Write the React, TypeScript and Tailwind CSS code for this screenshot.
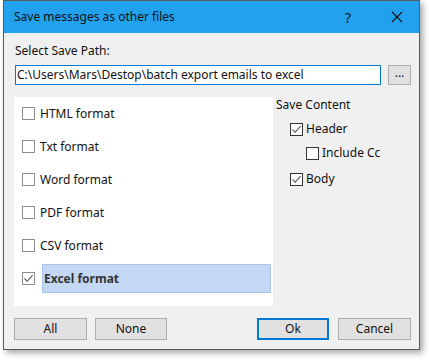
import React from 'react';

const FONT = { fontFamily: '"Segoe UI", "Noto Sans", sans-serif' };

function Check({ checked, dark }: { checked?: boolean; dark?: boolean }) {
  return (
    <span
      className={`flex h-[13px] w-[13px] shrink-0 items-center justify-center border bg-white ${dark ? 'border-[#333]' : 'border-[#8c8c8c]'}`}
    >
      {checked && (
        <svg width="11" height="11" viewBox="0 0 11 11" fill="none">
          <path d="M1.5 5.5 L4.2 8.3 L9.6 2.2" stroke="#555" strokeWidth="1.1" />
        </svg>
      )}
    </span>
  );
}

function Btn({ children, primary, className = '' }: { children: React.ReactNode; primary?: boolean; className?: string }) {
  return (
    <div
      className={`flex h-[22px] items-center justify-center bg-[#e1e1e1] text-[12px] text-[#111] ${primary ? 'border-2 border-[#0078d7]' : 'border border-[#adadad]'} ${className}`}
    >
      {children}
    </div>
  );
}

const FORMATS = ['HTML format', 'Txt format', 'Word format', 'PDF format', 'CSV format'];

export default function App() {
  return (
    <div className="h-[360px] w-[429px] bg-white" style={FONT}>
      <div className="ml-[3px] flex h-[350px] w-[417px] flex-col border border-[#5a5a5a] bg-[#f0f0f0] shadow-[3px_3px_6px_rgba(0,0,0,0.35)]">
        <div className="flex h-[32px] shrink-0 items-center bg-[#22a1ee] pl-[10px] text-[12px] text-[#111]">
          <span>Save messages as other files</span>
          <span className="ml-auto mr-[40px] text-[14px]">?</span>
          <svg width="12" height="12" viewBox="0 0 12 12" className="mr-[16px]">
            <path d="M1 1 L11 11 M11 1 L1 11" stroke="#111" strokeWidth="1.1" />
          </svg>
        </div>

        <div className="pl-[11px] pr-[8px]">
          <div className="mt-[9px] h-[17px] text-[12px] leading-[17px] text-[#111]">Select Save Path:</div>
          <div className="mt-[6px] flex gap-[7px]">
            <div className="flex h-[20px] w-[366px] items-center border border-[#0078d7] bg-white pl-[1px] text-[12px] text-[#111]">
              C:\Users\Mars\Destop\batch export emails to excel
            </div>
            <div className="flex h-[20px] w-[23px] items-center justify-center border border-[#adadad] bg-[#e1e1e1] pb-[4px] text-[12px] text-[#111]">
              ...
            </div>
          </div>
        </div>

        <div className="ml-[10px] mt-[12px] flex">
          <div className="h-[209px] w-[259px] bg-white">
            {FORMATS.map((f) => (
              <div key={f} className="flex h-[33px] items-center pl-[8px] text-[12px] text-[#111]">
                <Check />
                <span className="ml-[5px]">{f}</span>
              </div>
            ))}
            <div className="flex h-[33px] items-center pl-[8px] text-[12px] text-[#111]">
              <Check checked />
              <div className="ml-[7px] mr-[2px] flex h-[29px] flex-1 items-center border border-[#a9c4ea] bg-[#c4d8f3] pl-[1px] font-bold text-[#333]">
                Excel format
              </div>
            </div>
          </div>

          <div className="ml-[3px] text-[12px] text-[#111]">
            <div className="h-[16px] leading-[16px]">Save Content</div>
            <div className="mt-[7px] ml-[14px] flex items-center">
              <Check checked dark />
              <span className="ml-[3px]">Header</span>
            </div>
            <div className="mt-[6px] ml-[30px] flex items-center">
              <Check dark />
              <span className="ml-[3px]">Include Cc</span>
            </div>
            <div className="mt-[8px] ml-[14px] flex items-center">
              <Check checked dark />
              <span className="ml-[3px]">Body</span>
            </div>
          </div>
        </div>

        <div className="ml-[10px] mt-[12px] flex">
          <Btn className="w-[73px]">All</Btn>
          <Btn className="ml-[8px] w-[72px]">None</Btn>
          <Btn primary className="ml-[90px] w-[72px]">Ok</Btn>
          <Btn className="ml-[9px] w-[73px]">Cancel</Btn>
        </div>
      </div>
    </div>
  );
}
